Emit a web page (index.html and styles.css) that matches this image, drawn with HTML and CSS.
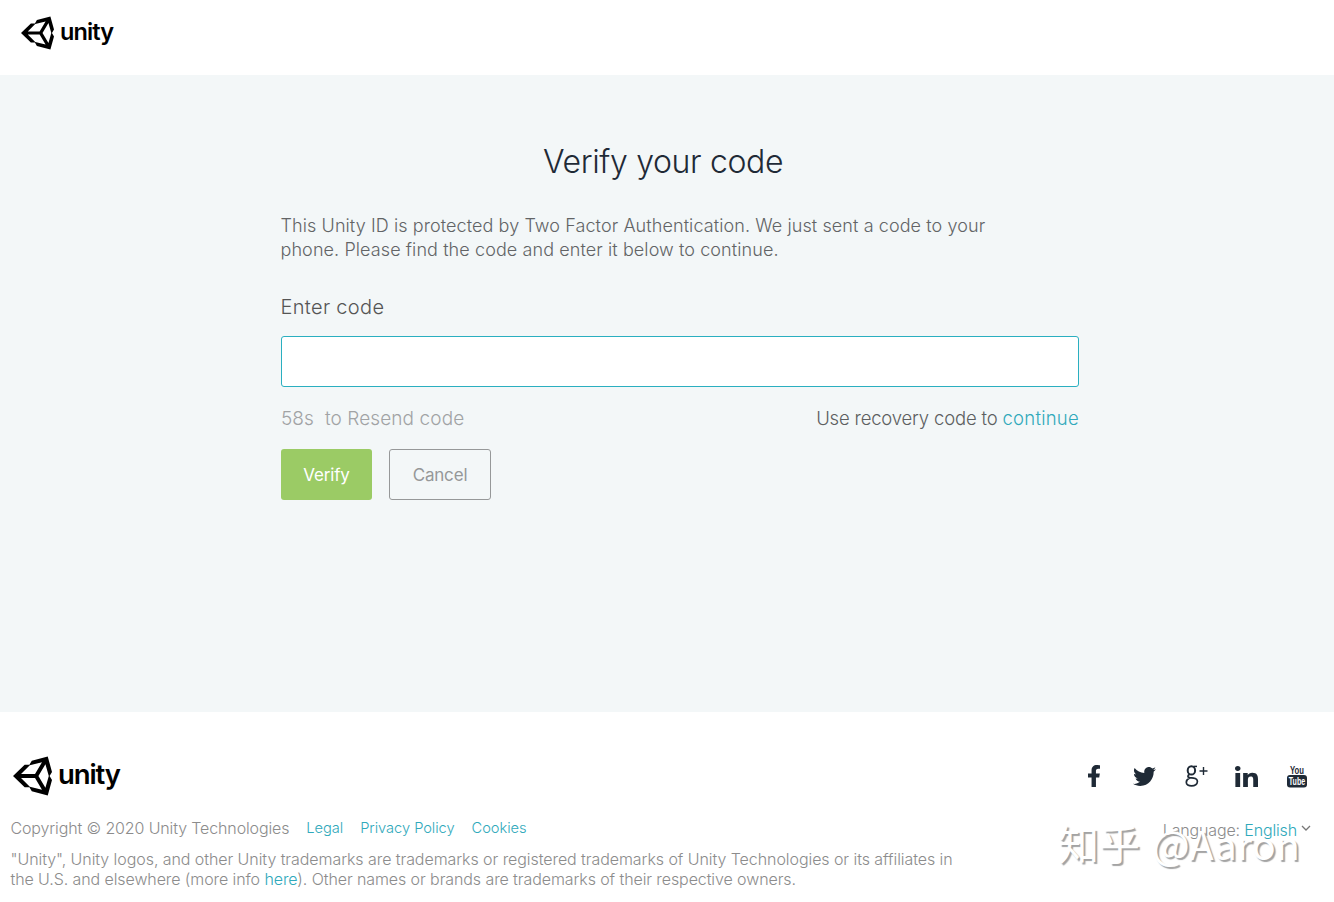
FILE: index.html
```html
<!DOCTYPE html>
<html lang="en">
<head>
<meta charset="utf-8">
<title>Verify your code</title>
<link rel="stylesheet" href="styles.css">
</head>
<body>
<svg class="defs" width="0" height="0">
  <symbol id="cube" viewBox="15.69 14.72 482.42 482.56"><path d="M498.11 206.4L445.31 14.72 248.2 66.08 219.05 116.26 159.9 115.83 15.69 256 159.9 396.17 219.05 395.74 248.2 445.92 445.31 497.28 498.1 305.6 468.15 256zM223.77 124.2L374.55 86.51 288 232.33H114.87zm0 263.63L114.87 279.71H288l86.55 145.81zm193 14L330.17 256l86.58-145.84L458.56 256z"/></symbol>
</svg>
<header class="topbar">
  <div class="logo">
    <svg class="logo-mark" width="33" height="34"><use href="#cube"/></svg>
    <span class="logo-word">unity</span>
  </div>
</header>
<main class="main">
  <h1 class="title">Verify your code</h1>
  <div class="form">
    <p class="intro">This Unity ID is protected by Two Factor Authentication. We just sent a code to your<br>phone. Please find the code and enter it below to continue.</p>
    <label class="label" for="code">Enter code</label>
    <input class="code" id="code" type="text">
    <div class="help">
      <span class="resend">58s&nbsp; to Resend code</span>
      <span class="recovery">Use recovery code to <a class="link recovery-link">continue</a></span>
    </div>
    <div class="actions">
      <button class="btn verify">Verify</button>
      <button class="btn cancel">Cancel</button>
    </div>
  </div>
</main>
<footer class="footer">
  <div class="footer-top">
    <div class="logo logo-large">
      <svg class="logo-mark" width="39" height="40"><use href="#cube"/></svg>
      <span class="logo-word">unity</span>
    </div>
    <nav class="social">
      <svg class="facebook" width="12" height="22" viewBox="22.89 0 274.22 512" preserveAspectRatio="none"><path d="M279.14 288l14.22-92.66h-88.91v-60.13c0-25.35 12.42-50.06 52.24-50.06h40.42V6.26S260.43 0 225.36 0c-73.22 0-121.08 44.38-121.08 124.72v70.62H22.89V288h81.39v224h100.17V288z"/></svg>
      <svg class="twitter" width="23" height="19" viewBox="0 48 512 416" preserveAspectRatio="none"><path d="M459.37 151.716c.325 4.548.325 9.097.325 13.645 0 138.72-105.583 298.558-298.558 298.558-59.452 0-114.68-17.219-161.137-47.106 8.447.974 16.568 1.299 25.34 1.299 49.055 0 94.213-16.568 130.274-44.832-46.132-.975-84.792-31.188-98.112-72.772 6.498.974 12.995 1.624 19.818 1.624 9.421 0 18.843-1.3 27.614-3.573-48.081-9.747-84.143-51.98-84.143-102.985v-1.299c13.969 7.797 30.214 12.67 47.431 13.319-28.264-18.843-46.781-51.005-46.781-87.391 0-19.492 5.197-37.36 14.294-52.954 51.655 63.675 129.3 105.258 216.365 109.807-1.624-7.797-2.599-15.918-2.599-24.04 0-57.828 46.782-104.934 104.934-104.934 30.213 0 57.502 12.67 76.67 33.137 23.715-4.548 46.456-13.32 66.599-25.34-7.798 24.366-24.366 44.833-46.132 57.827 21.117-2.273 41.584-8.122 60.426-16.243-14.292 20.791-32.161 39.308-52.628 54.253z"/></svg>
      <svg class="gplus" width="24" height="22" viewBox="0 0 24 22"><g fill="none" stroke="#1f2a36"><ellipse cx="6.400" cy="5.400" rx="3.700" ry="4.200" stroke-width="2"/><path d="M8.500 1.400H12" stroke-width="1.500"/><path d="M4.500 9.300C2.300 10.600 2.400 12.300 4.800 12.700L8.600 13.200C11.300 13.600 12.400 14.900 12.400 16.600 12.400 19.200 9.800 20.900 6.600 20.900 3.500 20.900 1.300 19.600 1.300 17.200 1.300 15.100 3 13.700 5 12.800" stroke-width="1.700"/><path d="M18.500 2v8M14.500 6h8" stroke-width="1.400"/></g></svg>
      <svg class="linkedin" width="23" height="21" viewBox="0 0 448 448" preserveAspectRatio="none"><path d="M100.28 448H7.4V148.9h92.88zM53.79 108.1C24.09 108.1 0 83.5 0 53.8a53.79 53.79 0 0 1 107.58 0c0 29.7-24.1 54.3-53.79 54.3zM447.9 448h-92.68V302.4c0-34.7-.7-79.2-48.29-79.2-48.29 0-55.69 37.7-55.69 76.7V448h-92.78V148.9h89.08v40.8h1.3c12.4-23.5 42.69-48.3 87.88-48.3 94 0 111.28 61.9 111.28 142.3V448z"/></svg>
      <svg class="youtube" width="20" height="24" viewBox="0 0 20 24"><text class="yt" x="3" y="9.500" textLength="14" lengthAdjust="spacingAndGlyphs">You</text><rect x="0" y="11" width="20" height="12.500" rx="3"/><text class="yt yt-light" x="1.800" y="21" textLength="16.400" lengthAdjust="spacingAndGlyphs">Tube</text></svg>
    </nav>
  </div>
  <div class="footer-mid">
    <div class="legal">
      <span class="copyright">Copyright © 2020 Unity Technologies</span>
      <a class="legal-link">Legal</a><a class="legal-link">Privacy Policy</a><a class="legal-link">Cookies</a>
    </div>
    <div class="language">Language: <a class="link">English</a><svg class="chevron" width="10" height="7" viewBox="0 0 10 7"><path d="M1 1l4 4 4-4" fill="none" stroke="#777" stroke-width="1.300"/></svg></div>
  </div>
  <p class="marks">"Unity", Unity logos, and other Unity trademarks are trademarks or registered trademarks of Unity Technologies or its affiliates in<br><span class="marks-end">the U.S. and elsewhere (more info <a class="link">here</a>). Other names or brands are trademarks of their respective owners.</span></p>
</footer>
<div class="watermark">知乎 <span class="watermark-name">@Aaron</span></div>
</body>
</html>
```
FILE: styles.css
```css
* { box-sizing: border-box; }
body { margin: 0; width: 1334px; height: 902px; overflow: hidden; background: #fff; font-family: Inter, "Liberation Sans", sans-serif; font-weight: 300; color: #555; position: relative; }
.defs { display: block; }
.topbar { height: 75px; padding: 16.400px 0 0 21.400px; }
.logo { display: flex; align-items: flex-start; color: #000; }
.logo-word { font-weight: 600; font-size: 23.500px; line-height: 30px; letter-spacing: -0.850px; margin: 1px 0 0 5.500px; }
.logo-large .logo-word { font-size: 27.500px; line-height: 34px; margin: 1px 0 0 6.500px; letter-spacing: -1.100px; }
.main { height: 637px; background: #f3f7f8; padding-top: 63px; }
.title { margin: 0; padding-left: 543px; font-weight: 270; font-size: 32px; line-height: 48px; color: #1f2a36; letter-spacing: -0.350px; white-space: nowrap; }
.form { margin-left: 281px; width: 798px; }
.intro { margin: 28px 0 0 -0.500px; font-size: 18px; line-height: 24px; white-space: nowrap; color: #626466; font-weight: 270; letter-spacing: 0.090px; }
.label { display: block; margin: 33px 0 0 -0.500px; font-size: 20px; line-height: 24px; font-weight: 350; letter-spacing: 0.330px; color: #555; }
.code { display: block; width: 798px; height: 51px; margin: 17px 0 0; border: 1px solid #2aafc0; border-radius: 3px; background: #fff; }
.help { display: flex; justify-content: space-between; height: 24px; margin-top: 20px; font-size: 19px; line-height: 24px; white-space: nowrap; }
.resend { color: #a1a3a5; letter-spacing: 0.100px; }
.recovery { margin-top: -0.500px; font-size: 18.500px; line-height: 23px; letter-spacing: -0.180px; color: #5d5f61; }
.recovery-link { letter-spacing: 0.250px; }
.link, .legal-link { color: #30a9bb; }
.actions { display: flex; gap: 17px; margin-top: 18px; }
.btn { height: 51px; padding: 0; font-family: inherit; font-size: 17px; border-radius: 3px; letter-spacing: -0.180px; }
.verify { width: 91px; border: 0; background: #9bcb65; color: #fff; font-weight: 400; }
.cancel { width: 102px; border: 1px solid #969899; background: transparent; color: #969899; font-weight: 370; }
.footer { padding: 44.400px 0 0 10.500px; color: #8c8c8c; }
.footer-top { display: flex; justify-content: space-between; height: 59.600px; padding: 0 27px 0 2px; }
.social { display: flex; align-items: center; height: 40px; fill: #1f2a36; }
.facebook { margin-right: 1px; }
.twitter { margin-left: 32px; }
.gplus { margin-left: 29px; }
.linkedin { margin-left: 26px; }
.youtube { margin-left: 29px; }
.yt { font: 700 10px "Liberation Sans", sans-serif; }
.yt-light { fill: #fff; }
.footer-mid { display: flex; justify-content: space-between; height: 33px; padding-right: 23px; white-space: nowrap; }
.legal { display: flex; line-height: 24px; }
.copyright { font-size: 16px; letter-spacing: -0.130px; }
.legal-link { font-size: 14.700px; line-height: 25px; letter-spacing: -0.060px; margin-left: 17px; }
.language { font-size: 16px; line-height: 28px; letter-spacing: -0.150px; }
.chevron { margin-left: 4px; vertical-align: 4px; }
.marks { margin: 0; font-size: 16px; line-height: 20px; letter-spacing: -0.068px; white-space: nowrap; }
.marks-end { letter-spacing: -0.090px; }
.watermark { position: absolute; left: 1058px; top: 814px; font-family: "Noto Sans CJK SC", sans-serif; font-weight: 400; font-size: 41px; line-height: 56px; color: #fff; text-shadow: 2px 2px 1px #a3a3a3; white-space: nowrap; }
.watermark-name { font-size: 39.500px; margin-left: 3px; }
```
